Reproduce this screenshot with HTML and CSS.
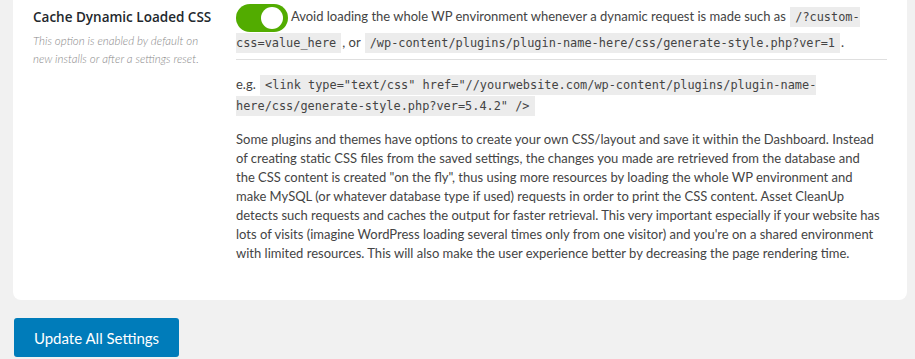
FILE: index.html
```html
<!DOCTYPE html>
<html lang="en">
<head>
<meta charset="utf-8">
<title>Cache Dynamic Loaded CSS</title>
<link rel="stylesheet" href="styles.css">
</head>
<body>
<div class="panel">
  <div class="row">
    <div class="label-col">
      <div class="title">Cache Dynamic Loaded CSS</div>
      <p class="desc">This option is enabled by default on new installs or after a settings reset.</p>
    </div>
    <div class="value-col">
      <p class="lead"><label class="switch"><span class="knob"></span></label> Avoid loading the whole WP environment whenever a dynamic request is made such as <code>/?custom-css=value_here</code>, or <code>/wp-content/plugins/plugin-name-here/css/generate-style.php?ver=1</code>.</p>
      <hr class="sep">
      <p class="example">e.g. <code>&lt;link type="text/css" href="//yourwebsite.com/wp-content/plugins/plugin-name-here/css/generate-style.php?ver=5.4.2" /&gt;</code></p>
      <p class="body-text">Some plugins and themes have options to create your own CSS/layout and save it within the Dashboard. Instead<br>of creating static CSS files from the saved settings, the changes you made are retrieved from the database and<br>the CSS content is created "on the fly", thus using more resources by loading the whole WP environment and<br>make MySQL (or whatever database type if used) requests in order to print the CSS content. Asset CleanUp<br>detects such requests and caches the output for faster retrieval. This very important especially if your website has<br>lots of visits (imagine WordPress loading several times only from one visitor) and you're on a shared environment<br>with limited resources. This will also make the user experience better by decreasing the page rendering time.</p>
    </div>
  </div>
</div>
<div class="actions">
  <button class="btn-primary" type="button">Update All Settings</button>
</div>
</body>
</html>
```

FILE: styles.css
```css
html, body {
  margin: 0;
  padding: 0;
}
body {
  background: #f1f1f1;
  font-family: Lato, "Noto Sans", sans-serif;
  font-size: 13px;
  color: #444;
}
.panel {
  margin-left: 13px;
  width: 894px;
  background: #fff;
  border-radius: 0 0 8px 8px;
  padding-bottom: 37px;
}
.row {
  display: flex;
  padding-left: 20px;
}
.label-col {
  width: 203px;
  flex: none;
}
.title {
  font-family: "Open Sans", sans-serif;
  font-weight: 600;
  font-size: 13.5px;
  white-space: nowrap;
  color: #23282d;
  line-height: 20px;
  padding-top: 7px;
}
.desc {
  margin: 5px 0 0;
  width: 170px;
  font-size: 11.5px;
  font-style: italic;
  font-weight: 300;
  color: #8a8a8a;
  line-height: 18px;
}
.value-col {
  width: 651px;
  flex: none;
}
.lead {
  margin: 4px 0 0;
  line-height: 25px;
}
.switch {
  display: inline-block;
  position: relative;
  width: 52px;
  height: 28px;
  border-radius: 14px;
  background: #52ac00;
  vertical-align: middle;
  margin-top: -3px;
  margin-bottom: -3px;
}
.knob {
  position: absolute;
  top: 3px;
  right: 5px;
  width: 22px;
  height: 22px;
  border-radius: 50%;
  background: #fff;
}
code {
  font-family: "DejaVu Sans Mono", monospace;
  font-size: 11.9px;
  background: #ececec;
  padding: 3px 5px 3px;
  margin: 0 1px;
}
.sep {
  border: 0;
  border-top: 1px solid #dfdfdf;
  margin: 3px 0 0;
}
.example {
  margin: 14px 0 0;
  line-height: 20px;
}
.example code {
  padding: 3px 5px;
}
.body-text {
  margin: 14px 0 0;
  white-space: nowrap;
  line-height: 19px;
}
.actions {
  padding: 18px 0 0 14px;
}
.btn-primary {
  width: 165px;
  height: 39px;
  background: #007cba;
  color: #fff;
  border: 0;
  border-radius: 3px;
  font-family: Lato, "Noto Sans", sans-serif;
  font-size: 15px;
  padding: 0;
}
```
